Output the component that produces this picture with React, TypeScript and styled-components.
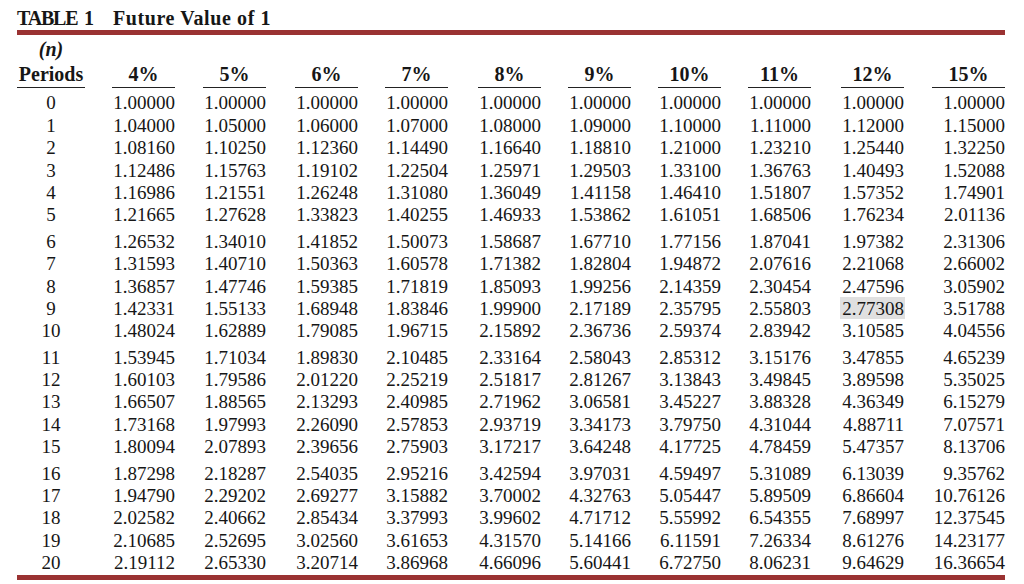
import React from "react";
import styled, { createGlobalStyle } from "styled-components";

const GlobalStyle = createGlobalStyle`
  html, body { margin: 0; padding: 0; background: #ffffff; }
  body { font-family: "Liberation Serif", "Times New Roman", serif; color: #161616; }
`;

const TRACKS = "68px 90px 91px 92px 90px 93px 90px 90px 90px 93px 101px";

const Page = styled.div`
  width: 988px;
  padding: 6px 0 0 17px;
`;

const Title = styled.h1`
  margin: 0;
  font-size: 20px;
  line-height: 24px;
  font-weight: 700;
  color: #161616;
  display: flex;
  gap: 20px;
`;

const TableNo = styled.span`
  letter-spacing: -1.2px;
  word-spacing: 3px;
`;

const TitleText = styled.span`
  letter-spacing: 0.6px;
`;

const Rule = styled.div<{ $h: number }>`
  height: ${(p) => p.$h}px;
  background: #9a3232;
`;

const HeaderRow = styled.div`
  display: grid;
  grid-template-columns: ${TRACKS};
  margin-top: 2px;
  align-items: end;
`;

const PeriodHead = styled.div`
  font-size: 20px;
  line-height: 25px;
  font-weight: 700;
  text-align: center;
  border-bottom: 1px solid #222;
  color: #161616;
`;

const Italic = styled.div`
  font-style: italic;
`;

const RateHead = styled.div<{ $wide?: boolean }>`
  justify-self: end;
  width: ${(p) => (p.$wide ? 73 : 63)}px;
  font-size: 20px;
  line-height: 25px;
  font-weight: 700;
  text-align: center;
  border-bottom: 1px solid #222;
  color: #161616;
`;

const Body = styled.div`
  padding-top: 4.4px;
`;

const Group = styled.div`
  & + & {
    margin-top: 4px;
  }
`;

const Row = styled.div`
  display: grid;
  grid-template-columns: ${TRACKS};
  height: 22.4px;
  font-size: 19px;
  line-height: 22.4px;
`;

const Period = styled.div`
  text-align: center;
`;

const Value = styled.div`
  text-align: right;
`;

const Mark = styled.span`
  background: #e0e0e0;
  padding: 1px 1px 0 2px;
  margin-right: -1px;
`;

const rates = ["4%", "5%", "6%", "7%", "8%", "9%", "10%", "11%", "12%", "15%"];

const data: string[][] = [
  ["1.00000", "1.00000", "1.00000", "1.00000", "1.00000", "1.00000", "1.00000", "1.00000", "1.00000", "1.00000"],
  ["1.04000", "1.05000", "1.06000", "1.07000", "1.08000", "1.09000", "1.10000", "1.11000", "1.12000", "1.15000"],
  ["1.08160", "1.10250", "1.12360", "1.14490", "1.16640", "1.18810", "1.21000", "1.23210", "1.25440", "1.32250"],
  ["1.12486", "1.15763", "1.19102", "1.22504", "1.25971", "1.29503", "1.33100", "1.36763", "1.40493", "1.52088"],
  ["1.16986", "1.21551", "1.26248", "1.31080", "1.36049", "1.41158", "1.46410", "1.51807", "1.57352", "1.74901"],
  ["1.21665", "1.27628", "1.33823", "1.40255", "1.46933", "1.53862", "1.61051", "1.68506", "1.76234", "2.01136"],
  ["1.26532", "1.34010", "1.41852", "1.50073", "1.58687", "1.67710", "1.77156", "1.87041", "1.97382", "2.31306"],
  ["1.31593", "1.40710", "1.50363", "1.60578", "1.71382", "1.82804", "1.94872", "2.07616", "2.21068", "2.66002"],
  ["1.36857", "1.47746", "1.59385", "1.71819", "1.85093", "1.99256", "2.14359", "2.30454", "2.47596", "3.05902"],
  ["1.42331", "1.55133", "1.68948", "1.83846", "1.99900", "2.17189", "2.35795", "2.55803", "2.77308", "3.51788"],
  ["1.48024", "1.62889", "1.79085", "1.96715", "2.15892", "2.36736", "2.59374", "2.83942", "3.10585", "4.04556"],
  ["1.53945", "1.71034", "1.89830", "2.10485", "2.33164", "2.58043", "2.85312", "3.15176", "3.47855", "4.65239"],
  ["1.60103", "1.79586", "2.01220", "2.25219", "2.51817", "2.81267", "3.13843", "3.49845", "3.89598", "5.35025"],
  ["1.66507", "1.88565", "2.13293", "2.40985", "2.71962", "3.06581", "3.45227", "3.88328", "4.36349", "6.15279"],
  ["1.73168", "1.97993", "2.26090", "2.57853", "2.93719", "3.34173", "3.79750", "4.31044", "4.88711", "7.07571"],
  ["1.80094", "2.07893", "2.39656", "2.75903", "3.17217", "3.64248", "4.17725", "4.78459", "5.47357", "8.13706"],
  ["1.87298", "2.18287", "2.54035", "2.95216", "3.42594", "3.97031", "4.59497", "5.31089", "6.13039", "9.35762"],
  ["1.94790", "2.29202", "2.69277", "3.15882", "3.70002", "4.32763", "5.05447", "5.89509", "6.86604", "10.76126"],
  ["2.02582", "2.40662", "2.85434", "3.37993", "3.99602", "4.71712", "5.55992", "6.54355", "7.68997", "12.37545"],
  ["2.10685", "2.52695", "3.02560", "3.61653", "4.31570", "5.14166", "6.11591", "7.26334", "8.61276", "14.23177"],
  ["2.19112", "2.65330", "3.20714", "3.86968", "4.66096", "5.60441", "6.72750", "8.06231", "9.64629", "16.36654"],
];

const groups: number[][] = [
  [0, 1, 2, 3, 4, 5],
  [6, 7, 8, 9, 10],
  [11, 12, 13, 14, 15],
  [16, 17, 18, 19, 20],
];

export default function App() {
  return (
    <>
      <GlobalStyle />
      <Page>
        <Title>
          <TableNo>TABLE 1</TableNo>
          <TitleText>Future Value of 1</TitleText>
        </Title>
        <Rule $h={5} />
        <HeaderRow>
          <PeriodHead>
            <Italic>(n)</Italic>
            <div>Periods</div>
          </PeriodHead>
          {rates.map((r, i) => (
            <RateHead key={r} $wide={i === rates.length - 1}>
              {r}
            </RateHead>
          ))}
        </HeaderRow>
        <Body>
          {groups.map((g, gi) => (
            <Group key={gi}>
              {g.map((n) => (
                <Row key={n}>
                  <Period>{n}</Period>
                  {data[n].map((v, ci) => (
                    <Value key={ci}>
                      {n === 9 && ci === 8 ? <Mark>{v}</Mark> : v}
                    </Value>
                  ))}
                </Row>
              ))}
            </Group>
          ))}
        </Body>
        <Rule $h={5} />
      </Page>
    </>
  );
}
